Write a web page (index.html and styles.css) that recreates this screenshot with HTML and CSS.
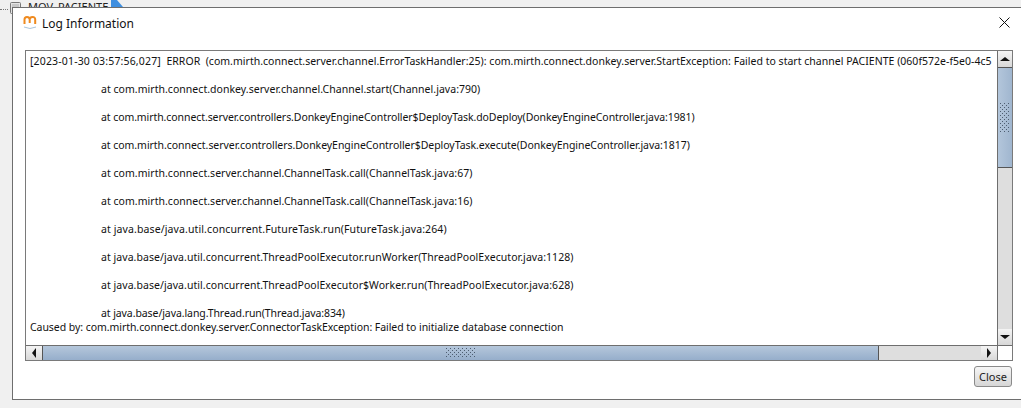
FILE: index.html
```html
<!DOCTYPE html>
<html lang="en">
<head>
<meta charset="utf-8">
<title>Log Information</title>
<link rel="stylesheet" href="styles.css">
</head>
<body>
<div class="backdrop">
  <div class="tabstrip">
    <span class="dots"></span>
    <svg class="doc-icon" width="11" height="12" viewBox="0 0 11 12"><rect x="0.5" y="0.5" width="10" height="11" rx="1" fill="#e4e4e4" stroke="#777"/><path d="M2 3h7M2 5h7M2 7h7" stroke="#aaa"/></svg>
    <span class="tabname">MOV_PACIENTE</span>
    <svg class="tab-flag" width="12" height="7" viewBox="0 0 12 7"><path d="M0 7V0h6l6 7z" fill="#3f8fe0"/></svg>
  </div>
  <section class="dialog">
    <header class="titlebar">
      <svg class="logo" width="16" height="18" viewBox="0 0 16 18"><path d="M2.5 10V5.5Q2.5 3 5 3T7.7 5.5V9M7.7 5.5Q7.7 3 10.5 3T13.2 5.5V10" fill="none" stroke="#ef8a1f" stroke-width="2"/><path d="M2 13Q8 16 14 13" fill="none" stroke="#a9c4dc" stroke-width="1"/></svg>
      <span class="title">Log Information</span>
      <svg class="close-x" width="11" height="11" viewBox="0 0 11 11"><path d="M0.5 0.5L10.5 10.5M10.5 0.5L0.5 10.5" stroke="#111" stroke-width="1"/></svg>
    </header>
    <div class="scrollpane">
      <div class="viewport">
        <div class="log">
          <p class="line sp-first"><span class="stamp">[2023-01-30 03:57:56,027]</span>&nbsp; ERROR&nbsp; (com.mirth.connect.server.channel.ErrorTaskHandler:25): com.mirth.connect.donkey.server.StartException: Failed to start channel PACIENTE (060f572e-f5e0-4c5</p>
          <p class="line indent sp-a">at com.mirth.connect.donkey.server.channel.Channel.start(Channel.java:790)</p>
          <p class="line indent sp-b">at com.mirth.connect.server.controllers.DonkeyEngineController$DeployTask.doDeploy(DonkeyEngineController.java:1981)</p>
          <p class="line indent sp-c">at com.mirth.connect.server.controllers.DonkeyEngineController$DeployTask.execute(DonkeyEngineController.java:1817)</p>
          <p class="line indent sp-a">at com.mirth.connect.server.channel.ChannelTask.call(ChannelTask.java:67)</p>
          <p class="line indent sp-a">at com.mirth.connect.server.channel.ChannelTask.call(ChannelTask.java:16)</p>
          <p class="line indent sp-d">at java.base/java.util.concurrent.FutureTask.run(FutureTask.java:264)</p>
          <p class="line indent sp-e">at java.base/java.util.concurrent.ThreadPoolExecutor.runWorker(ThreadPoolExecutor.java:1128)</p>
          <p class="line indent sp-e">at java.base/java.util.concurrent.ThreadPoolExecutor$Worker.run(ThreadPoolExecutor.java:628)</p>
          <p class="line indent tight sp-f">at java.base/java.lang.Thread.run(Thread.java:834)</p>
          <p class="line sp-last">Caused by: com.mirth.connect.donkey.server.ConnectorTaskException: Failed to initialize database connection</p>
        </div>
        <div class="vbar">
          <div class="sb-btn sb-btn-v"><span class="arrow arrow-up"></span></div>
          <div class="thumb thumb-v"><span class="grip grip-v"></span></div>
          <div class="track"></div>
          <div class="sb-btn sb-btn-v"><span class="arrow arrow-down"></span></div>
        </div>
      </div>
      <div class="hbar">
        <div class="sb-btn sb-btn-h"><span class="arrow arrow-left"></span></div>
        <div class="thumb thumb-h"><span class="grip grip-h"></span></div>
        <div class="track"></div>
        <div class="sb-btn sb-btn-h"><span class="arrow arrow-right"></span></div>
        <div class="corner"></div>
      </div>
    </div>
    <footer class="actions"><button class="close-btn" type="button">Close</button></footer>
  </section>
</div>
</body>
</html>
```
FILE: styles.css
```css
* { box-sizing: border-box; }
html, body { margin: 0; padding: 0; }
body { width: 1021px; height: 408px; overflow: hidden; background: #f0f0f0; font-family: "Noto Sans", "Open Sans", sans-serif; font-size: 10.5px; color: #111; }
.backdrop { height: 408px; display: flex; flex-direction: column; }
.tabstrip { height: 14px; flex: none; display: flex; align-items: flex-start; overflow: hidden; font-size: 11px; color: #222; }
.dots { width: 8px; height: 1px; margin: 9px 2px 0 0; border-top: 1px dotted #777; }
.doc-icon { margin: 2px 0 0 0; flex: none; }
.tabname { margin: 0 0 0 7px; line-height: 14px; }
.tab-flag { margin: 0 0 0 3px; flex: none; }
.dialog { position: relative; margin: -7px 0 0 12px; height: 393px; flex: none; background: #fff; border: 1px solid #6e6e6e; border-right: 0; display: flex; flex-direction: column; }
.titlebar { height: 42px; padding: 5px 11px 0 9px; flex: none; display: flex; align-items: flex-start; }
.logo { margin-top: 1px; flex: none; }
.title { margin: 2px 0 0 4px; font-size: 12px; line-height: 17px; color: #111; }
.close-x { margin: 4px 0 0 auto; flex: none; }
.scrollpane { margin: 0 8px 0 12px; height: 311px; border: 1px solid #7a7a7a; flex: none; display: flex; flex-direction: column; }
.viewport { flex: 1; min-height: 0; display: flex; }
.log { flex: 1; min-width: 0; overflow: hidden; padding: 3px 0 0 4px; }
.line { margin: 0 0 14px; height: 14px; line-height: 14px; white-space: nowrap; }
.indent { padding-left: 71px; }
.tight { margin-bottom: 0; }
.stamp { letter-spacing: 0.16px; }
.sp-first { letter-spacing: 0.02px; }
.sp-a { letter-spacing: 0.035px; }
.sp-b { letter-spacing: -0.08px; }
.sp-c { letter-spacing: -0.045px; }
.sp-d { letter-spacing: 0.115px; }
.sp-e { letter-spacing: 0.055px; }
.sp-f { letter-spacing: -0.08px; }
.sp-last { letter-spacing: -0.055px; }
.vbar { width: 15px; flex: none; display: flex; flex-direction: column; border-left: 1px solid #6e6e6e; }
.hbar { height: 15px; flex: none; display: flex; border-top: 1px solid #6e6e6e; }
.sb-btn { flex: none; display: flex; align-items: center; justify-content: center; background: linear-gradient(#f4f4f4, #d8d8d8); }
.sb-btn-v { height: 16px; }
.sb-btn-h { width: 16px; }
.track { flex: 1; background: #dedede; }
.thumb { flex: none; display: flex; align-items: center; justify-content: center; }
.thumb-v { height: 101px; background: linear-gradient(90deg, #b3c6db, #a0b6cf); border-top: 1px solid #555; border-bottom: 1px solid #555; }
.thumb-h { width: 837px; background: linear-gradient(#b5c7db, #96aecb); border-left: 1px solid #555; border-right: 1px solid #555; }
.grip { display: block; background-image: radial-gradient(circle at 0.5px 0.5px, #4d5d70 0.7px, transparent 0.8px), radial-gradient(circle at 0.5px 0.5px, #4d5d70 0.7px, transparent 0.8px); background-size: 4px 4px; background-position: 0 0, 2px 2px; }
.grip-v { width: 10px; height: 30px; }
.grip-h { width: 30px; height: 10px; }
.corner { width: 15px; flex: none; background: #fff; border-left: 1px solid #6e6e6e; }
.arrow { width: 0; height: 0; display: block; border-style: solid; border-color: transparent; }
.arrow-up { border-width: 0 5px 4px; border-bottom-color: #111; }
.arrow-down { border-width: 4px 5px 0; border-top-color: #111; }
.arrow-left { border-width: 5px 4px 5px 0; border-right-color: #111; }
.arrow-right { border-width: 5px 0 5px 4px; border-left-color: #111; }
.actions { display: flex; justify-content: flex-end; padding: 5px 9px 0 0; }
.close-btn { width: 38px; height: 21px; padding: 0; font: inherit; font-size: 11px; color: #222; border: 1px solid #8a8a8a; border-radius: 3px; background: linear-gradient(#f6f6f6, #d6d6d6); }
```
